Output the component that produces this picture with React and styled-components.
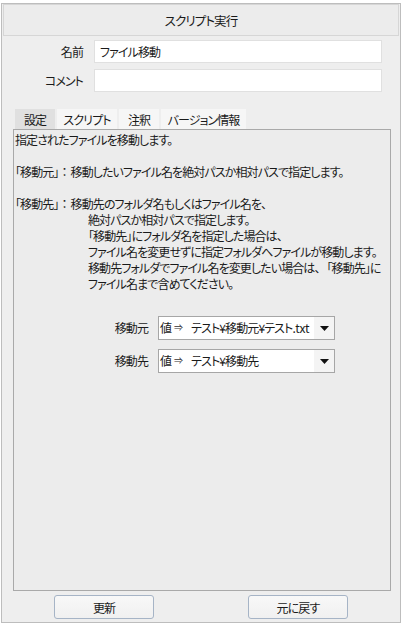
import styled, { createGlobalStyle } from "styled-components";

const GlobalStyle = createGlobalStyle`
  html, body {
    margin: 0;
    padding: 0;
    background: #ffffff;
  }
  body {
    font-family: "Noto Sans CJK JP", "Noto Sans", sans-serif;
    font-size: 12px;
    letter-spacing: -0.9px;
    color: #1a1a1a;
    font-feature-settings: "palt";
  }
`;

const Window = styled.div`
  box-sizing: border-box;
  margin: 3px 4px 2px 1px;
  width: 400px;
  height: 620px;
  border: 1px solid #bdbdbd;
  background: #eeeeee;
  display: flex;
  flex-direction: column;
`;

const TitleBar = styled.div`
  box-sizing: border-box;
  height: 32px;
  margin: 0 1px 0 1px;
  border: 1px solid #d6d6d6;
  background: #ececec;
  display: flex;
  align-items: center;
  justify-content: center;
  font-size: 12.5px;
`;

const Form = styled.div`
  display: grid;
  grid-template-columns: 80px 288px;
  column-gap: 11px;
  row-gap: 6px;
  align-items: center;
  padding: 4px 0 0 1px;
`;

const Label = styled.div`
  text-align: right;
`;

const TextInput = styled.div`
  box-sizing: border-box;
  height: 23px;
  background: #ffffff;
  border: 1px solid #e0e0e0;
  padding: 0 5px;
  display: flex;
  align-items: center;
`;

const Tabs = styled.div`
  display: flex;
  gap: 2px;
  margin: 17px 0 0 13px;
`;

const Tab = styled.div`
  box-sizing: border-box;
  height: 20px;
  width: ${(p) => p.w}px;
  display: flex;
  align-items: center;
  justify-content: center;
  background: ${(p) => (p.active ? "#e0e0e0" : "#f6f6f6")};
`;

const Panel = styled.div`
  box-sizing: border-box;
  margin: 0 9px 0 11px;
  height: 462px;
  border: 1px solid #a9a9a9;
  background: #ececec;
  padding: 2px 0 0 1px;
  line-height: 16px;
`;

const Line = styled.div`
  height: 16px;
  white-space: nowrap;
  padding-left: ${(p) => p.indent || 0}px;
`;

const Full = styled.span`
  font-feature-settings: normal;
  letter-spacing: 0;
`;

const Fields = styled.div`
  display: grid;
  grid-template-columns: 50px 177px;
  column-gap: 10px;
  row-gap: 9px;
  align-items: center;
  margin: 24px 0 0 83px;
`;

const Select = styled.div`
  box-sizing: border-box;
  height: 24px;
  border: 1px solid #a6a6a6;
  background: #ffffff;
  display: flex;
  align-items: stretch;
`;

const SelectValue = styled.div`
  flex: 1;
  display: flex;
  align-items: center;
  padding-left: 1px;
  white-space: nowrap;
  overflow: hidden;
`;

const Arrow = styled.div`
  width: 20px;
  background: #f4f4f4;
  display: flex;
  align-items: center;
  justify-content: center;
`;

const Hint = styled.span`
  font-size: 9px;
  letter-spacing: 0;
  margin: 0 8px 0 3px;
  color: #333;
`;

const Latin = styled.span`
  letter-spacing: 0;
`;

const Buttons = styled.div`
  display: flex;
  justify-content: space-between;
  padding: 4px 52px 0 52px;
`;

const Button = styled.div`
  box-sizing: border-box;
  width: 100px;
  height: 24px;
  border: 1px solid #a6b4c6;
  border-radius: 3px;
  background: linear-gradient(#f8f8f8, #f0f0f0);
  display: flex;
  align-items: center;
  justify-content: center;
`;

const DropIcon = () => (
  <svg width="9" height="5" viewBox="0 0 9 5">
    <path d="M0 0h9L4.5 5z" fill="#111" />
  </svg>
);

// colons and commas keep their full width, as in the original dialog
const renderText = (text) =>
  text.split(/([：、])/).map((part, i) =>
    /^[：、]$/.test(part) ? <Full key={i}>{part}</Full> : part
  );

const lines = [
  { t: "指定されたファイルを移動します。" },
  { t: "" },
  { t: "「移動元」：移動したいファイル名を絶対パスか相対パスで指定します。" },
  { t: "" },
  { t: "「移動先」：移動先のフォルダ名もしくはファイル名を、" },
  { t: "絶対パスか相対パスで指定します。", i: 73 },
  { t: "「移動先」にフォルダ名を指定した場合は、", i: 73 },
  { t: "ファイル名を変更せずに指定フォルダへファイルが移動します。", i: 73 },
  { t: "移動先フォルダでファイル名を変更したい場合は、「移動先」に", i: 73 },
  { t: "ファイル名まで含めてください。", i: 73 },
];

const tabs = [
  { label: "設定", w: 40, active: true },
  { label: "スクリプト", w: 60 },
  { label: "注釈", w: 40 },
  { label: "バージョン情報", w: 85 },
];

export default function App() {
  return (
    <>
      <GlobalStyle />
      <Window>
        <TitleBar>スクリプト実行</TitleBar>
        <Form>
          <Label>名前</Label>
          <TextInput>ファイル移動</TextInput>
          <Label>コメント</Label>
          <TextInput />
        </Form>
        <Tabs>
          {tabs.map((t) => (
            <Tab key={t.label} w={t.w} active={t.active}>
              {t.label}
            </Tab>
          ))}
        </Tabs>
        <Panel>
          {lines.map((l, n) => (
            <Line key={n} indent={l.i}>
              {renderText(l.t)}
            </Line>
          ))}
          <Fields>
            <Label>移動元</Label>
            <Select>
              <SelectValue>
                値<Hint>⇒</Hint>テスト¥移動元¥テスト<Latin>.txt</Latin>
              </SelectValue>
              <Arrow>
                <DropIcon />
              </Arrow>
            </Select>
            <Label>移動先</Label>
            <Select>
              <SelectValue>
                値<Hint>⇒</Hint>テスト¥移動先
              </SelectValue>
              <Arrow>
                <DropIcon />
              </Arrow>
            </Select>
          </Fields>
        </Panel>
        <Buttons>
          <Button>更新</Button>
          <Button>元に戻す</Button>
        </Buttons>
      </Window>
    </>
  );
}
